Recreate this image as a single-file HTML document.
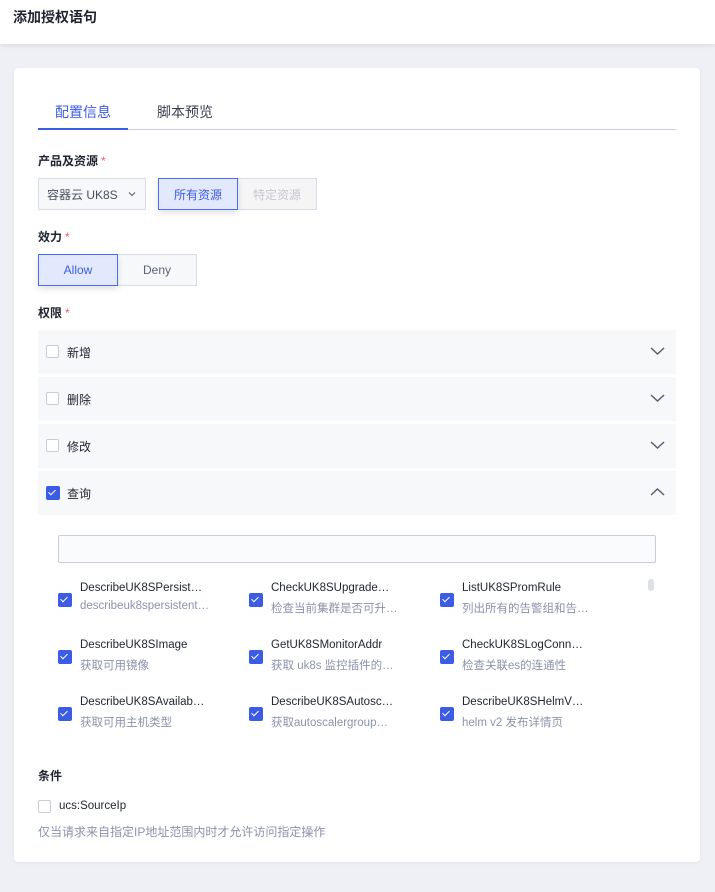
<!DOCTYPE html>
<html><head><meta charset="utf-8"><style>
*{box-sizing:border-box;margin:0;padding:0}
body{width:715px;height:892px;background:#eef0f6;font-family:"Liberation Sans","Noto Sans CJK SC",sans-serif;position:relative;overflow:hidden;color:#1f2430}
.a{position:absolute}
.hdr{left:0;top:0;width:715px;height:44px;background:#fff;box-shadow:0 2px 4px rgba(0,0,0,.08)}
.card{left:14px;top:68px;width:686px;height:794px;background:#fff;border-radius:4px;box-shadow:0 1px 3px rgba(0,0,0,.06)}
.lbl{font-size:12px;font-weight:bold;color:#1f2430}
.lbl i{color:#f5576c;font-style:normal;font-weight:normal;margin-left:3px}
.btn{height:32px;font-size:12px;display:flex;align-items:center;justify-content:center;border:1px solid #d8dce6;background:#f7f8fa;color:#5a6277}
.on{border-color:#4a6cf7;background:#e3e9fd;color:#3d5ce6;box-shadow:0 3px 6px rgba(0,0,0,.12);z-index:2}
.row{left:38px;width:638px;height:44px;background:#f7f8fa;font-size:12px}
.cb{width:13px;height:13px;border:1px solid #c7cbd6;background:#fff;border-radius:2px}
.ck{width:14px;height:14px;background:#3d5ce6;border-radius:2px}
.ck:after{content:"";position:absolute;left:4px;top:2px;width:3px;height:6px;border:solid #fff;border-width:0 1.5px 1.5px 0;transform:rotate(45deg)}
.t1{font-size:11.5px;color:#1f2430}
.t2{font-size:11.5px;color:#8a93aa}
</style></head><body>
<div class="a hdr"></div>
<div class="a" style="left:13px;top:7px;font-size:14px;font-weight:bold">添加授权语句</div>
<div class="a card"></div>
<div class="a" style="left:55px;top:102px;font-size:14px;color:#3d5ce6">配置信息</div>
<div class="a" style="left:157px;top:102px;font-size:14px;color:#3a4050">脚本预览</div>
<div class="a" style="left:38px;top:129px;width:638px;height:1px;background:#c9cdd9"></div>
<div class="a" style="left:38px;top:128px;width:90px;height:2px;background:#3d5ce6"></div>
<div class="a lbl" style="left:38px;top:152px">产品及资源<i>*</i></div>
<div class="a btn" style="left:38px;top:178px;width:108px;justify-content:flex-start;padding-left:8px;color:#4a5060">容器云 UK8S<svg style="margin-left:10px" width="8" height="6"><path d="M1 1.5l3 3 3-3" fill="none" stroke="#5a6070" stroke-width="1.1"/></svg></div>
<div class="a btn on" style="left:158px;top:178px;width:80px">所有资源</div>
<div class="a btn" style="left:237px;top:178px;width:80px;color:#c5c8d0;background:#f5f5f6">特定资源</div>
<div class="a lbl" style="left:38px;top:228px">效力<i>*</i></div>
<div class="a btn on" style="left:38px;top:254px;width:80px">Allow</div>
<div class="a btn" style="left:117px;top:254px;width:80px">Deny</div>
<div class="a lbl" style="left:38px;top:304px">权限<i>*</i></div>

<div class="a row" style="top:330px"><div class="a cb" style="left:8px;top:15px"></div><span class="a" style="left:29px;top:14px">新增</span><svg class="a" style="left:612px;top:16px" width="15" height="10"><path d="M1 2l6.5 6 6.5-6" fill="none" stroke="#5a6070" stroke-width="1.5"/></svg></div>
<div class="a row" style="top:377px"><div class="a cb" style="left:8px;top:15px"></div><span class="a" style="left:29px;top:14px">删除</span><svg class="a" style="left:612px;top:16px" width="15" height="10"><path d="M1 2l6.5 6 6.5-6" fill="none" stroke="#5a6070" stroke-width="1.5"/></svg></div>
<div class="a row" style="top:424px"><div class="a cb" style="left:8px;top:15px"></div><span class="a" style="left:29px;top:14px">修改</span><svg class="a" style="left:612px;top:16px" width="15" height="10"><path d="M1 2l6.5 6 6.5-6" fill="none" stroke="#5a6070" stroke-width="1.5"/></svg></div>
<div class="a row" style="top:471px"><div class="a ck" style="left:8px;top:15px"></div><span class="a" style="left:29px;top:14px">查询</span><svg class="a" style="left:612px;top:16px" width="15" height="10"><path d="M1 8l6.5-6 6.5 6" fill="none" stroke="#5a6070" stroke-width="1.5"/></svg></div>

<div class="a" style="left:58px;top:535px;width:598px;height:28px;border:1px solid #c9cdd9;background:#fafbfc;border-radius:2px"></div>
<div class="a" style="left:648px;top:579px;width:6px;height:12px;background:#dde0e6;border-radius:3px"></div>

<div class="a ck" style="left:58px;top:593px"></div><div class="a t1" style="left:80px;top:582px">DescribeUK8SPersist…</div><div class="a t2" style="left:80px;top:600px">describeuk8spersistent…</div>
<div class="a ck" style="left:249px;top:593px"></div><div class="a t1" style="left:271px;top:582px">CheckUK8SUpgrade…</div><div class="a t2" style="left:271px;top:600px">检查当前集群是否可升…</div>
<div class="a ck" style="left:440px;top:593px"></div><div class="a t1" style="left:462px;top:582px">ListUK8SPromRule</div><div class="a t2" style="left:462px;top:600px">列出所有的告警组和告…</div>

<div class="a ck" style="left:58px;top:650px"></div><div class="a t1" style="left:80px;top:639px">DescribeUK8SImage</div><div class="a t2" style="left:80px;top:657px">获取可用镜像</div>
<div class="a ck" style="left:249px;top:650px"></div><div class="a t1" style="left:271px;top:639px">GetUK8SMonitorAddr</div><div class="a t2" style="left:271px;top:657px">获取 uk8s 监控插件的…</div>
<div class="a ck" style="left:440px;top:650px"></div><div class="a t1" style="left:462px;top:639px">CheckUK8SLogConn…</div><div class="a t2" style="left:462px;top:657px">检查关联es的连通性</div>

<div class="a ck" style="left:58px;top:707px"></div><div class="a t1" style="left:80px;top:696px">DescribeUK8SAvailab…</div><div class="a t2" style="left:80px;top:714px">获取可用主机类型</div>
<div class="a ck" style="left:249px;top:707px"></div><div class="a t1" style="left:271px;top:696px">DescribeUK8SAutosc…</div><div class="a t2" style="left:271px;top:714px">获取autoscalergroup…</div>
<div class="a ck" style="left:440px;top:707px"></div><div class="a t1" style="left:462px;top:696px">DescribeUK8SHelmV…</div><div class="a t2" style="left:462px;top:714px">helm v2 发布详情页</div>

<div class="a lbl" style="left:38px;top:767px">条件</div>
<div class="a cb" style="left:38px;top:800px"></div>
<div class="a t1" style="left:59px;top:800px">ucs:SourceIp</div>
<div class="a t2" style="left:38px;top:823px;font-size:12px">仅当请求来自指定IP地址范围内时才允许访问指定操作</div>
</body></html>
